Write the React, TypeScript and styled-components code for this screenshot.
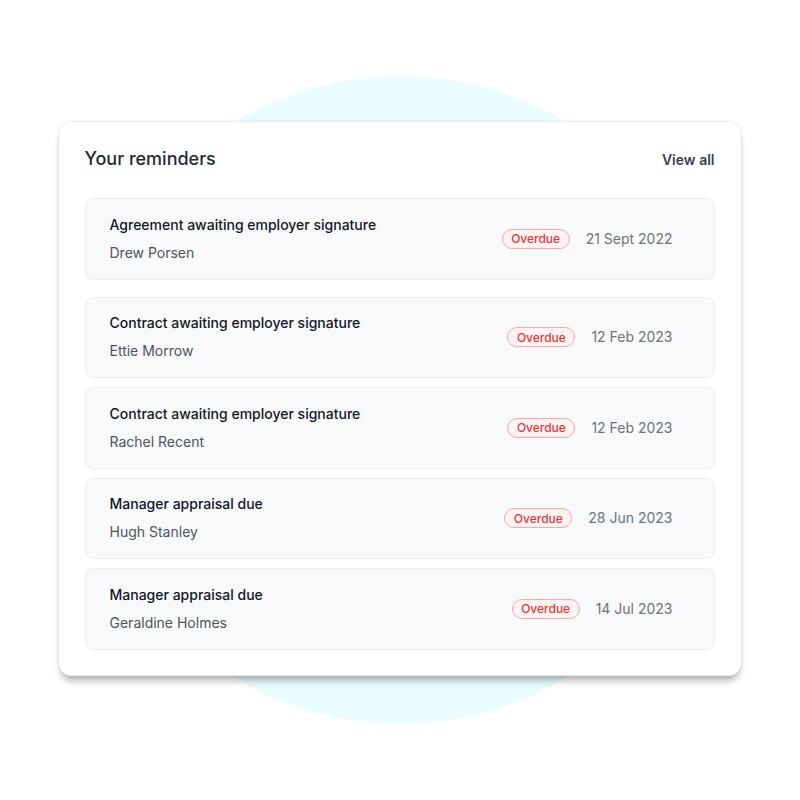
import React from "react";
import styled, { createGlobalStyle } from "styled-components";

const Global = createGlobalStyle`
  html, body { margin: 0; padding: 0; background: #ffffff; }
  body { font-family: Inter, "Noto Sans", sans-serif; -webkit-font-smoothing: antialiased; }
`;

const Page = styled.div`
  position: relative;
  width: 800px;
  height: 800px;
  overflow: hidden;
  display: flex;
  justify-content: center;
  align-items: flex-start;
`;

const Blob = styled.div`
  position: absolute;
  left: 76px;
  top: 76px;
  width: 648px;
  height: 648px;
  border-radius: 50%;
  background: #ebfeff;
  z-index: 0;
`;

const Card = styled.section`
  position: relative;
  z-index: 1;
  margin-top: 122px;
  margin-right: 1px;
  width: 682px;
  box-sizing: border-box;
  padding: 23px 26px 25px 26px;
  background: #ffffff;
  border-radius: 12px;
  border-bottom: 1px solid #e5e7eb;
  box-shadow: 0 0 3px rgba(0, 0, 0, 0.14), 0 7px 7px -2px rgba(0, 0, 0, 0.28);
`;

const Header = styled.header`
  display: flex;
  justify-content: space-between;
  align-items: center;
  height: 28px;
  margin-bottom: 25px;
`;

const Title = styled.h2`
  margin: 0;
  font-size: 18px;
  line-height: 28px;
  font-weight: 500;
  color: #1f2937;
`;

const ViewAll = styled.a`
  font-size: 14px;
  font-weight: 600;
  color: #374151;
  text-decoration: none;
  cursor: pointer;
`;

const List = styled.ul`
  list-style: none;
  margin: 0;
  padding: 0;
  display: flex;
  flex-direction: column;
  gap: 9px;
`;

const Row = styled.li<{ $extra?: number }>`
  display: flex;
  align-items: center;
  justify-content: space-between;
  box-sizing: border-box;
  height: 81.5px;
  padding: 0 41px 0 24px;
  background: #f8f9fb;
  border: 1px solid #eceef2;
  border-radius: 8px;
  margin-bottom: ${(p) => p.$extra ?? 0}px;
`;

const Info = styled.div`
  display: flex;
  flex-direction: column;
  gap: 8px;
`;

const ItemTitle = styled.div`
  font-size: 14px;
  line-height: 20px;
  font-weight: 500;
  color: #111827;
`;

const Person = styled.div`
  font-size: 14px;
  line-height: 20px;
  color: #4b5563;
`;

const Meta = styled.div`
  display: flex;
  align-items: center;
  gap: 16px;
`;

const Badge = styled.span`
  display: inline-flex;
  align-items: center;
  box-sizing: border-box;
  height: 20px;
  padding: 0 8.5px;
  border-radius: 999px;
  border: 1px solid #fca5a5;
  background: #fef2f2;
  color: #dc3b3b;
  font-size: 12px;
  font-weight: 500;
`;

const DateText = styled.span`
  font-size: 14px;
  line-height: 20px;
  color: #6b7280;
`;

const items = [
  { title: "Agreement awaiting employer signature", person: "Drew Porsen", date: "21 Sept 2022" },
  { title: "Contract awaiting employer signature", person: "Ettie Morrow", date: "12 Feb 2023" },
  { title: "Contract awaiting employer signature", person: "Rachel Recent", date: "12 Feb 2023" },
  { title: "Manager appraisal due", person: "Hugh Stanley", date: "28 Jun 2023" },
  { title: "Manager appraisal due", person: "Geraldine Holmes", date: "14 Jul 2023" },
];

export default function App() {
  return (
    <>
      <Global />
      <Page>
        <Blob />
        <Card>
          <Header>
            <Title>Your reminders</Title>
            <ViewAll>View all</ViewAll>
          </Header>
          <List>
            {items.map((it, i) => (
              <Row key={i} $extra={i === 0 ? 8 : 0}>
                <Info>
                  <ItemTitle>{it.title}</ItemTitle>
                  <Person>{it.person}</Person>
                </Info>
                <Meta>
                  <Badge>Overdue</Badge>
                  <DateText>{it.date}</DateText>
                </Meta>
              </Row>
            ))}
          </List>
        </Card>
      </Page>
    </>
  );
}
